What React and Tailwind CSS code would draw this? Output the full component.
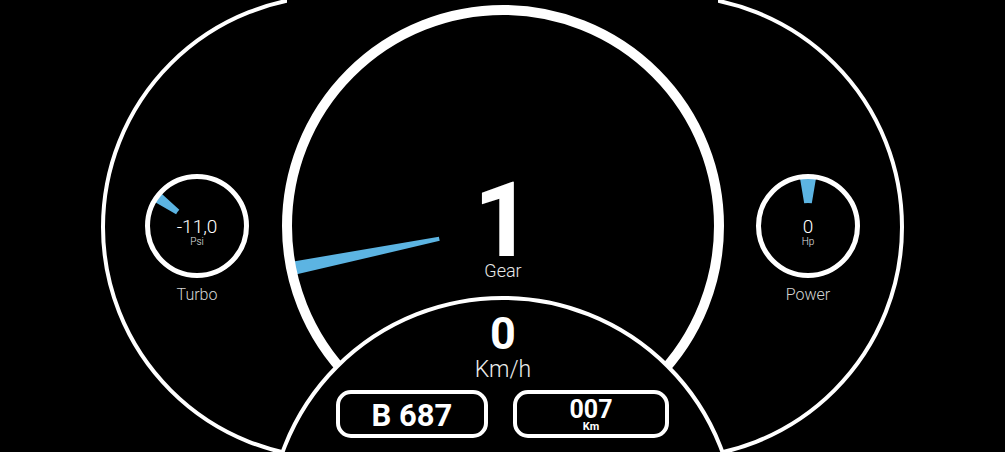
import React from 'react';

const BLUE = '#5cb4e2';

// annular slice, angle in degrees clockwise from 12 o'clock
const wedge = (cx, cy, r1, r2, ang, width) => {
  const pt = (r, a) => {
    const rad = (a * Math.PI) / 180;
    return `${(cx + r * Math.sin(rad)).toFixed(2)} ${(cy - r * Math.cos(rad)).toFixed(2)}`;
  };
  const a1 = ang - width / 2;
  const a2 = ang + width / 2;
  return `M ${pt(r1, a1)} L ${pt(r2, a1)} A ${r2} ${r2} 0 0 1 ${pt(r2, a2)} L ${pt(r1, a2)} A ${r1} ${r1} 0 0 0 ${pt(r1, a1)} Z`;
};

const Dial = () => (
  <svg className="absolute inset-0" width="1005" height="452" viewBox="0 0 1005 452">
    <defs>
      <clipPath id="leftSide">
        <rect x="0" y="0" width="287" height="452" />
      </clipPath>
      <clipPath id="rightSide">
        <rect x="718" y="0" width="287" height="452" />
      </clipPath>
    </defs>

    <circle cx="334" cy="227" r="231" fill="none" stroke="#fff" strokeWidth="4" clipPath="url(#leftSide)" />
    <circle cx="671" cy="227" r="231" fill="none" stroke="#fff" strokeWidth="4" clipPath="url(#rightSide)" />

    <path d={wedge(197, 226, 24, 49, -54, 13)} fill={BLUE} />
    <circle cx="197" cy="226" r="49.5" fill="none" stroke="#fff" strokeWidth="5" />
    <path d={wedge(808, 226, 23, 49, 0, 19)} fill={BLUE} />
    <circle cx="808" cy="226" r="49.5" fill="none" stroke="#fff" strokeWidth="5" />

    <circle cx="503" cy="226" r="216" fill="#000" />
    <path d={wedge(503, 226, 65, 214, -101.4, 3.6)} fill={BLUE} />
    <circle cx="503" cy="226" r="216" fill="none" stroke="#fff" strokeWidth="10" />

    <circle cx="502.5" cy="532" r="234" fill="#000" stroke="#fff" strokeWidth="4" />
  </svg>
);

const SmallGauge = ({ value, unit, label, left }) => (
  <div className={`absolute top-[217px] ${left} w-[120px] flex flex-col items-center`}>
    <span className="text-[19px] leading-none font-light text-white">{value}</span>
    <span className="text-[10px] leading-none font-light text-[#e6e6e6] mt-[1px]">{unit}</span>
    <span className="text-[16px] leading-none font-light text-[#d4d4d4] mt-[40px]">{label}</span>
  </div>
);

export default function App() {
  return (
    <div
      className="relative w-[1005px] h-[452px] bg-black overflow-hidden"
      style={{ fontFamily: 'Roboto, "Liberation Sans", sans-serif' }}
    >
      <Dial />

      <SmallGauge value="-11,0" unit="Psi" label="Turbo" left="left-[137px]" />
      <SmallGauge value="0" unit="Hp" label="Power" left="left-[748px]" />

      <div className="absolute top-[169px] left-[403px] w-[200px] flex flex-col items-center">
        <span className="text-[103px] leading-none font-bold text-white">1</span>
        <span className="text-[18px] leading-none font-light text-[#e8e8e8] -mt-[10px]">Gear</span>
      </div>

      <div className="absolute top-[311px] left-[403px] w-[200px] flex flex-col items-center">
        <span className="text-[45px] leading-none font-bold text-white">0</span>
        <span className="text-[23px] leading-none font-light text-[#ececec] mt-[2px]">Km/h</span>
      </div>

      <div className="absolute top-[390px] left-[336px] flex gap-[25px]">
        <div className="w-[152px] h-[48px] border-4 border-white rounded-[15px] flex items-center justify-center pt-[3px]">
          <span className="text-[31px] leading-none font-bold text-white">B 687</span>
        </div>
        <div className="w-[156px] h-[48px] border-4 border-white rounded-[15px] flex flex-col items-center justify-center pt-[1px]">
          <span className="text-[25px] leading-none font-bold text-white">007</span>
          <span className="text-[11px] leading-none font-bold text-white -mt-[1px]">Km</span>
        </div>
      </div>
    </div>
  );
}
